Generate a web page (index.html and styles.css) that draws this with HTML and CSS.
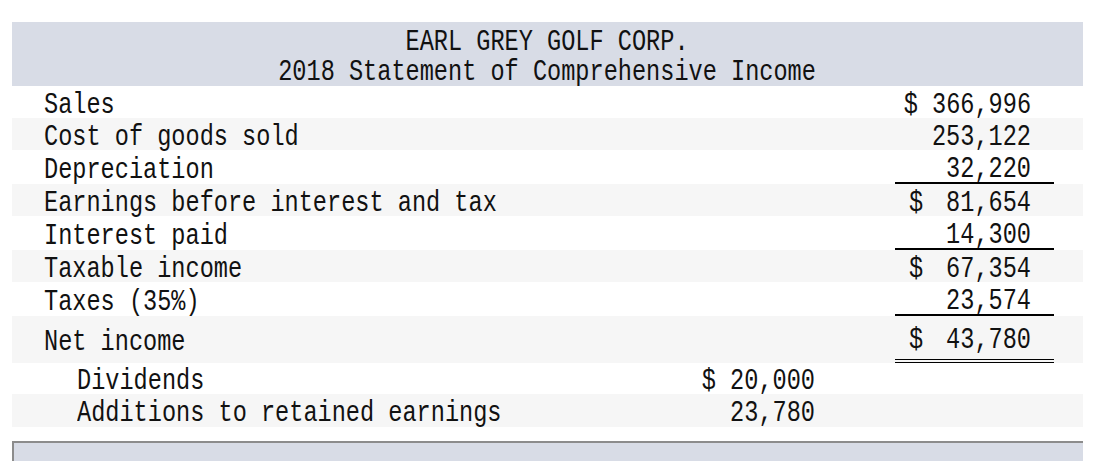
FILE: index.html
```html
<!DOCTYPE html>
<html>
<head>
<meta charset="utf-8">
<link rel="stylesheet" href="styles.css">
</head>
<body>
<div class="sheet">
  <div class="head">
    <div class="hline"><span class="t c">EARL GREY GOLF CORP.</span></div>
    <div class="hline"><span class="t c">2018 Statement of Comprehensive Income</span></div>
  </div>

  <div class="row h-sales">
    <div class="lab"><span class="t">Sales</span></div>
    <div class="c2"></div><div class="sp"></div>
    <div class="c3"><span class="t r">$ 366,996</span></div>
  </div>
  <div class="row gray h-32">
    <div class="lab"><span class="t">Cost of goods sold</span></div>
    <div class="c2"></div><div class="sp"></div>
    <div class="c3"><span class="t r">253,122</span></div>
  </div>
  <div class="row h-34">
    <div class="lab"><span class="t">Depreciation</span></div>
    <div class="c2"></div><div class="sp"></div>
    <div class="c3 line"><span class="t r">32,220</span></div>
  </div>
  <div class="row gray h-32">
    <div class="lab"><span class="t">Earnings before interest and tax</span></div>
    <div class="c2"></div><div class="sp"></div>
    <div class="c3 dol"><span class="t d">$</span><span class="t r">81,654</span></div>
  </div>
  <div class="row h-34">
    <div class="lab"><span class="t">Interest paid</span></div>
    <div class="c2"></div><div class="sp"></div>
    <div class="c3 line"><span class="t r">14,300</span></div>
  </div>
  <div class="row gray h-32">
    <div class="lab"><span class="t">Taxable income</span></div>
    <div class="c2"></div><div class="sp"></div>
    <div class="c3 dol"><span class="t d">$</span><span class="t r">67,354</span></div>
  </div>
  <div class="row h-34">
    <div class="lab"><span class="t">Taxes (35%)</span></div>
    <div class="c2"></div><div class="sp"></div>
    <div class="c3 line"><span class="t r">23,574</span></div>
  </div>
  <div class="row gray h-net">
    <div class="lab"><span class="t">Net income</span></div>
    <div class="c2"></div><div class="sp"></div>
    <div class="c3 dol dbl"><span class="t d">$</span><span class="t r">43,780</span></div>
  </div>
  <div class="row h-31">
    <div class="lab ind"><span class="t">Dividends</span></div>
    <div class="c2"><span class="t r">$ 20,000</span></div><div class="sp"></div>
    <div class="c3"></div>
  </div>
  <div class="row gray h-33">
    <div class="lab ind"><span class="t">Additions to retained earnings</span></div>
    <div class="c2"><span class="t r">23,780</span></div><div class="sp"></div>
    <div class="c3"></div>
  </div>

  <div class="foot"></div>
</div>
</body>
</html>
```

FILE: styles.css
```css
html, body {
  margin: 0;
  padding: 0;
  background: #ffffff;
}

.sheet {
  margin: 22px 0 0 12px;
  width: 1071px;
  color: #111111;
}

.t {
  display: inline-block;
  flex-shrink: 0;
  font-family: "Liberation Mono", monospace;
  font-size: 30px;
  line-height: 28px;
  padding-top: 5px;
  white-space: pre;
  transform: scaleX(0.786);
  transform-origin: left center;
}

.t.r {
  transform-origin: right center;
}

.t.c {
  transform-origin: center center;
  padding-top: 2px;
}

.t.d {
  width: 12px;
}

.head {
  background: #d8dce6;
  height: 64px;
  padding-top: 4px;
  box-sizing: border-box;
  display: flex;
  flex-direction: column;
}

.hline {
  height: 30px;
  flex-shrink: 0;
  display: flex;
  justify-content: center;
  align-items: flex-start;
}

.row {
  display: flex;
  align-items: stretch;
}

.row.gray {
  background: #f6f6f6;
}

.h-sales { height: 32px; }
.h-31 { height: 31px; }
.h-32 { height: 32px; }
.h-33 { height: 33px; }
.h-34 { height: 34px; }
.h-net { height: 47px; }

.lab {
  width: 683px;
  box-sizing: border-box;
  padding-left: 32px;
  display: flex;
  align-items: center;
}

.lab.ind {
  padding-left: 65px;
}

.c2 {
  width: 120px;
  display: flex;
  justify-content: flex-end;
  align-items: center;
}

.sp {
  width: 80px;
}

.c3 {
  width: 159px;
  box-sizing: border-box;
  padding-right: 23px;
  display: flex;
  justify-content: flex-end;
  align-items: center;
}

.c3.dol {
  justify-content: space-between;
  padding-left: 14px;
}

.c3.line {
  border-bottom: 2px solid #000;
}

.c3.dbl {
  border-bottom: 4px double #000;
}

.foot {
  margin-top: 14px;
  height: 40px;
  background: #d8dce6;
  border-top: 2px solid #8c8c8c;
  border-left: 2px solid #8c8c8c;
}
```
